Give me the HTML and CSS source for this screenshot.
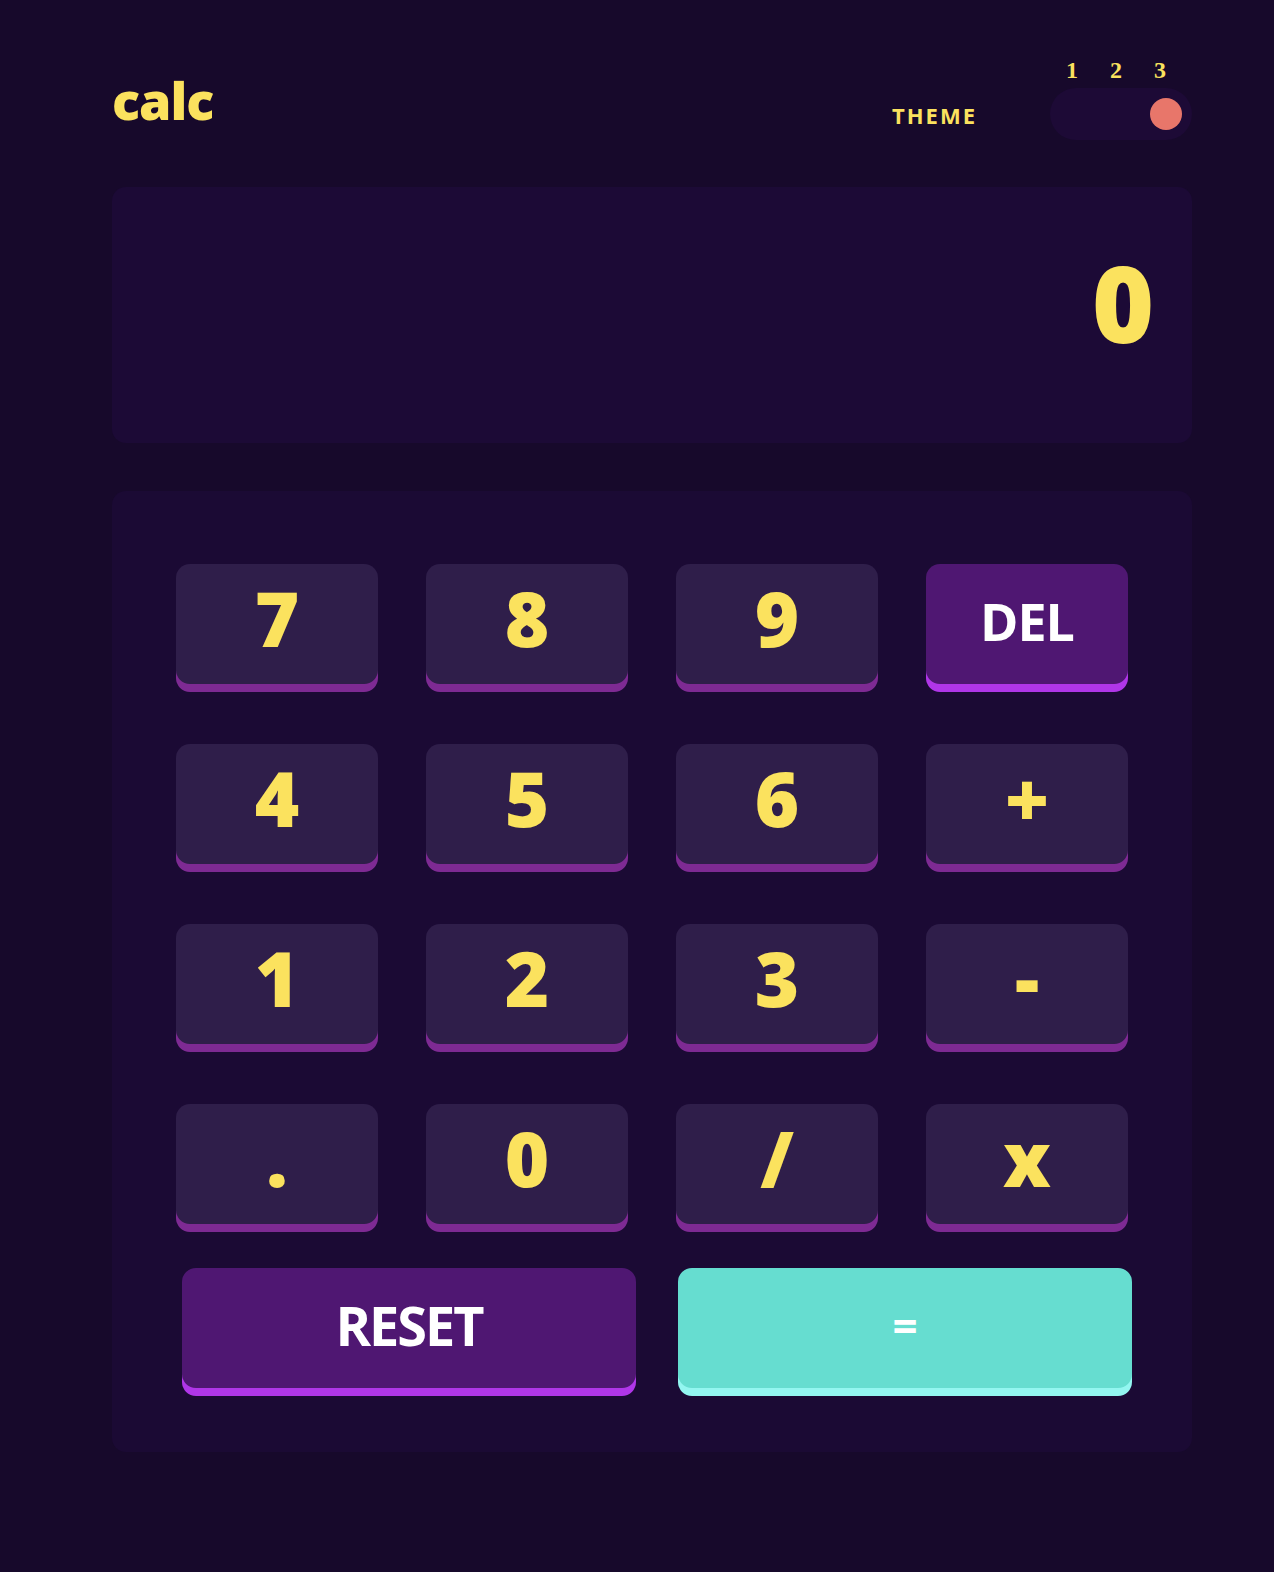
FILE: index.html
```html
<!DOCTYPE html>
<html lang="en">
<head>
<meta charset="utf-8">
<title>Calculator app</title>
<link rel="stylesheet" href="styles.css">
</head>
<body>
<main class="calc">
  <header class="top">
    <h1 class="logo">calc</h1>
    <div class="theme">
      <span class="theme-label">THEME</span>
      <div class="switch">
        <div class="switch-nums"><span>1</span><span>2</span><span>3</span></div>
        <div class="switch-track"><span class="switch-knob"></span></div>
      </div>
    </div>
  </header>

  <section class="screen">
    <output class="screen-value">0</output>
  </section>

  <section class="keypad">
    <div class="keys">
      <button class="key">7</button>
      <button class="key">8</button>
      <button class="key">9</button>
      <button class="key key--del">DEL</button>
      <button class="key">4</button>
      <button class="key">5</button>
      <button class="key">6</button>
      <button class="key">+</button>
      <button class="key">1</button>
      <button class="key">2</button>
      <button class="key">3</button>
      <button class="key">-</button>
      <button class="key">.</button>
      <button class="key">0</button>
      <button class="key">/</button>
      <button class="key">x</button>
    </div>
    <div class="actions">
      <button class="key key--reset">RESET</button>
      <button class="key key--equals">=</button>
    </div>
  </section>
</main>
</body>
</html>
```

FILE: styles.css
```css
* {
  box-sizing: border-box;
}

body {
  margin: 0;
  background: #17092b;
  font-family: "Open Sans", "Liberation Sans", sans-serif;
  color: #fbe25e;
}

.calc {
  width: 1080px;
  margin-left: 112px;
  padding-top: 56px;
  padding-bottom: 120px;
}

/* header */
.top {
  height: 84px;
  display: flex;
  justify-content: space-between;
  align-items: flex-end;
}

.logo {
  margin: 0 0 14px;
  font-size: 52px;
  line-height: 1;
  font-weight: 800;
  letter-spacing: -1px;
  color: #fbe25e;
}

.theme {
  display: flex;
  align-items: flex-end;
  gap: 73px;
}

.theme-label {
  font-size: 22px;
  line-height: 22px;
  font-weight: 700;
  letter-spacing: 2px;
  margin-bottom: 14px;
}

.switch {
  width: 142px;
}

.switch-nums {
  display: grid;
  grid-template-columns: repeat(3, 44px);
  height: 28px;
  margin-bottom: 4px;
  font-family: "Liberation Serif", serif;
  font-weight: 700;
  font-size: 24px;
  line-height: 28px;
  text-align: center;
}

.switch-track {
  height: 52px;
  border-radius: 26px;
  background: #1d0a36;
  padding: 0 10px;
  display: flex;
  align-items: center;
  justify-content: flex-end;
}

.switch-knob {
  width: 32px;
  height: 32px;
  border-radius: 50%;
  background: #e8766a;
}

/* screen */
.screen {
  margin-top: 47px;
  height: 256px;
  border-radius: 14px;
  background: #1c0a36;
  display: flex;
  align-items: center;
  justify-content: flex-end;
  padding: 0 38px 26px 0;
}

.screen-value {
  font-size: 106px;
  line-height: 1;
  font-weight: 800;
  color: #fbe25e;
}

/* keypad */
.keypad {
  margin-top: 48px;
  padding: 73px 64px 64px;
  border-radius: 14px;
  background: #1b0a34;
}

.keys {
  display: grid;
  grid-template-columns: repeat(4, 202px);
  column-gap: 48px;
  row-gap: 60px;
}

.key {
  height: 120px;
  border: none;
  border-radius: 14px;
  background: #2f1e4a;
  box-shadow: 0 8px 0 #7e2a93;
  color: #fbe25e;
  font-family: "Open Sans", "Liberation Sans", sans-serif;
  font-weight: 800;
  font-size: 76px;
  line-height: 1;
  display: flex;
  align-items: center;
  justify-content: center;
  padding: 0 0 12px;
}

.key--del {
  background: #4f1772;
  box-shadow: 0 8px 0 #b036e8;
  color: #ffffff;
  font-size: 52px;
  font-weight: 700;
  letter-spacing: -1px;
  padding-bottom: 6px;
}

.actions {
  margin-top: 44px;
  margin-left: 6px;
  display: grid;
  grid-template-columns: repeat(2, 454px);
  column-gap: 42px;
}

.key--reset {
  background: #4f1772;
  box-shadow: 0 8px 0 #b036e8;
  color: #ffffff;
  font-size: 54px;
  font-weight: 700;
  letter-spacing: -2px;
  padding-bottom: 6px;
}

.key--equals {
  background: #66ddd0;
  box-shadow: 0 8px 0 #93f6f0;
  color: #ffffff;
  font-size: 44px;
  font-weight: 700;
  padding-bottom: 6px;
}
```
